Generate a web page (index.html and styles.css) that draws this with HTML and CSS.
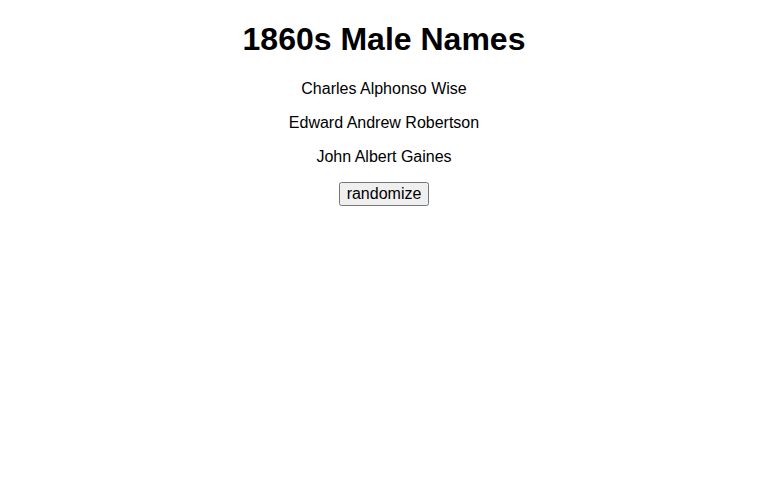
FILE: index.html
```html
<!DOCTYPE html>
<html lang="en">
<head>
  <meta charset="UTF-8" />
  <meta name="viewport" content="width=device-width, initial-scale=1.0" />
  <title>1860s Male Names</title>
  <link rel="stylesheet" href="styles.css">
</head>
<body>
  <h1>1860s Male Names</h1>

  <div id="names">
    <p class="name">Charles Alphonso Wise</p>
    <p class="name">Edward Andrew Robertson</p>
    <p class="name">John Albert Gaines</p>
  </div>

  <div class="actions">
    <button id="randomize" type="button">randomize</button>
  </div>
</body>
</html>
```

FILE: styles.css
```css
body {
  margin: 0;
  font-family: "Liberation Sans", Arial, sans-serif;
  text-align: center;
  color: #000;
  background: #fff;
}
h1 {
  font-size: 32px;
}
.name {
  font-size: 16px;
}
.actions button {
  font-family: "Liberation Sans", Arial, sans-serif;
  font-size: 16px;
}
```
